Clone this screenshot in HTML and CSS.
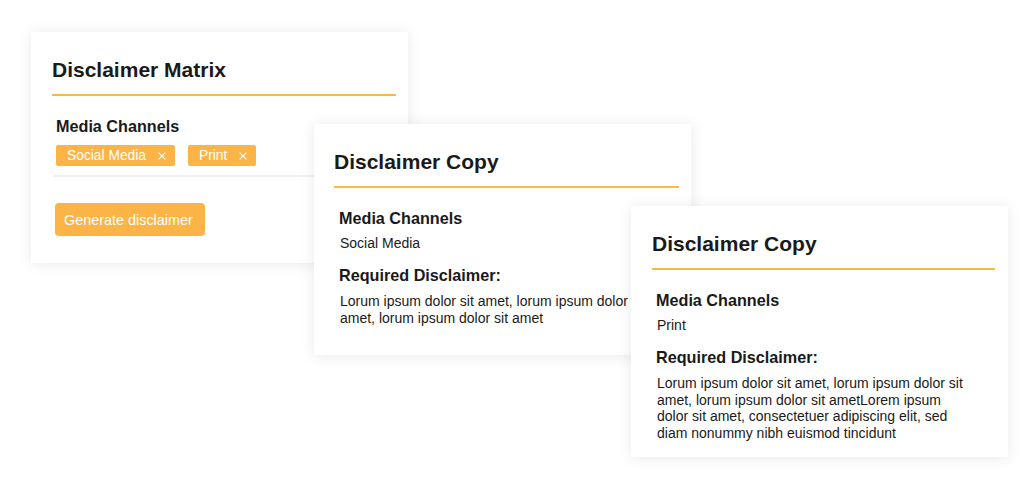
FILE: index.html
```html
<!DOCTYPE html>
<html lang="en">
<head>
<meta charset="utf-8">
<title>Disclaimer Matrix</title>
<link rel="stylesheet" href="styles.css">
</head>
<body>
<div class="canvas">
  <section class="card card-matrix">
    <h2 class="card-title">Disclaimer Matrix</h2>
    <div class="section">
      <h3 class="label">Media Channels</h3>
      <div class="chips">
        <span class="chip">Social Media<svg class="chip-x" viewBox="0 0 8 8"><path d="M0.6 0.6L7.4 7.4M7.4 0.6L0.6 7.4"/></svg></span>
        <span class="chip">Print<svg class="chip-x" viewBox="0 0 8 8"><path d="M0.6 0.6L7.4 7.4M7.4 0.6L0.6 7.4"/></svg></span>
      </div>
    </div>
    <div class="separator"></div>
    <button class="btn">Generate disclaimer</button>
  </section>

  <section class="card card-copy1">
    <h2 class="card-title">Disclaimer Copy</h2>
    <div class="section">
      <h3 class="label">Media Channels</h3>
      <p class="value">Social Media</p>
      <h3 class="label label-req">Required Disclaimer:</h3>
      <p class="body">Lorum ipsum dolor sit amet, lorum ipsum dolor sit amet, lorum ipsum dolor sit amet</p>
    </div>
  </section>

  <section class="card card-copy2">
    <h2 class="card-title">Disclaimer Copy</h2>
    <div class="section">
      <h3 class="label">Media Channels</h3>
      <p class="value">Print</p>
      <h3 class="label label-req">Required Disclaimer:</h3>
      <p class="body">Lorum ipsum dolor sit amet, lorum ipsum dolor sit amet, lorum ipsum dolor sit ametLorem ipsum dolor sit amet, consectetuer adipiscing elit, sed diam nonummy nibh euismod tincidunt</p>
    </div>
  </section>
</div>
</body>
</html>
```
FILE: styles.css
```css
* { box-sizing: border-box; }
html, body {
  margin: 0;
  padding: 0;
  background: #ffffff;
  overflow: hidden;
}
body {
  font-family: "Liberation Sans", Arial, sans-serif;
  color: #1a1a1a;
}
.canvas {
  position: relative;
  width: 1024px;
  height: 477px;
}
.card {
  position: absolute;
  width: 377px;
  background: #ffffff;
  padding: 26px 12px 15px 21px;
  box-shadow: 0 1px 14px rgba(0, 0, 0, 0.09);
}
.card-matrix { left: 31px; top: 32px; height: 231px; }
.card-copy1 { left: 314px; top: 124px; height: 231px; padding-left: 20px; }
.card-copy2 { left: 631px; top: 206px; padding-right: 13px; }

.card-title {
  margin: 0;
  font-size: 21px;
  line-height: 24px;
  font-weight: 700;
  padding-bottom: 12px;
  border-bottom: 2px solid #fbb748;
}
.section {
  padding-left: 4px;
  margin-top: 20px;
}
.card-copy1 .section { padding-left: 5px; }
.label {
  margin: 0;
  font-size: 16.2px;
  line-height: 20px;
  font-weight: 700;
}
.label-req { margin-top: 13px; }
.value {
  margin: 7px 0 0 1px;
  font-size: 14px;
  line-height: 17px;
}
.body {
  margin: 8px 0 0 1px;
  max-width: 316px;
  font-size: 14px;
  line-height: 16.7px;
}
.chips {
  display: flex;
  gap: 13px;
  margin-top: 9px;
}
.chip {
  display: inline-flex;
  align-items: center;
  height: 21px;
  padding: 0 9px 0 11px;
  background: #fbb445;
  color: #ffffff;
  border-radius: 2px;
  font-size: 13.8px;
}
.chip-x {
  width: 8px;
  height: 8px;
  margin-left: 12px;
  fill: none;
  stroke: #ffffff;
  stroke-width: 1.3;
}
.separator {
  margin: 9px 0 0 1px;
  height: 2px;
  background: #efefef;
}
.btn {
  display: block;
  margin: 26px 0 0 3px;
  width: 150px;
  height: 33px;
  padding: 0 0 0 9px;
  text-align: left;
  border: none;
  border-radius: 4px;
  background: #fbb445;
  color: #ffffff;
  font-family: "Liberation Sans", Arial, sans-serif;
  font-size: 14.4px;
}
```
